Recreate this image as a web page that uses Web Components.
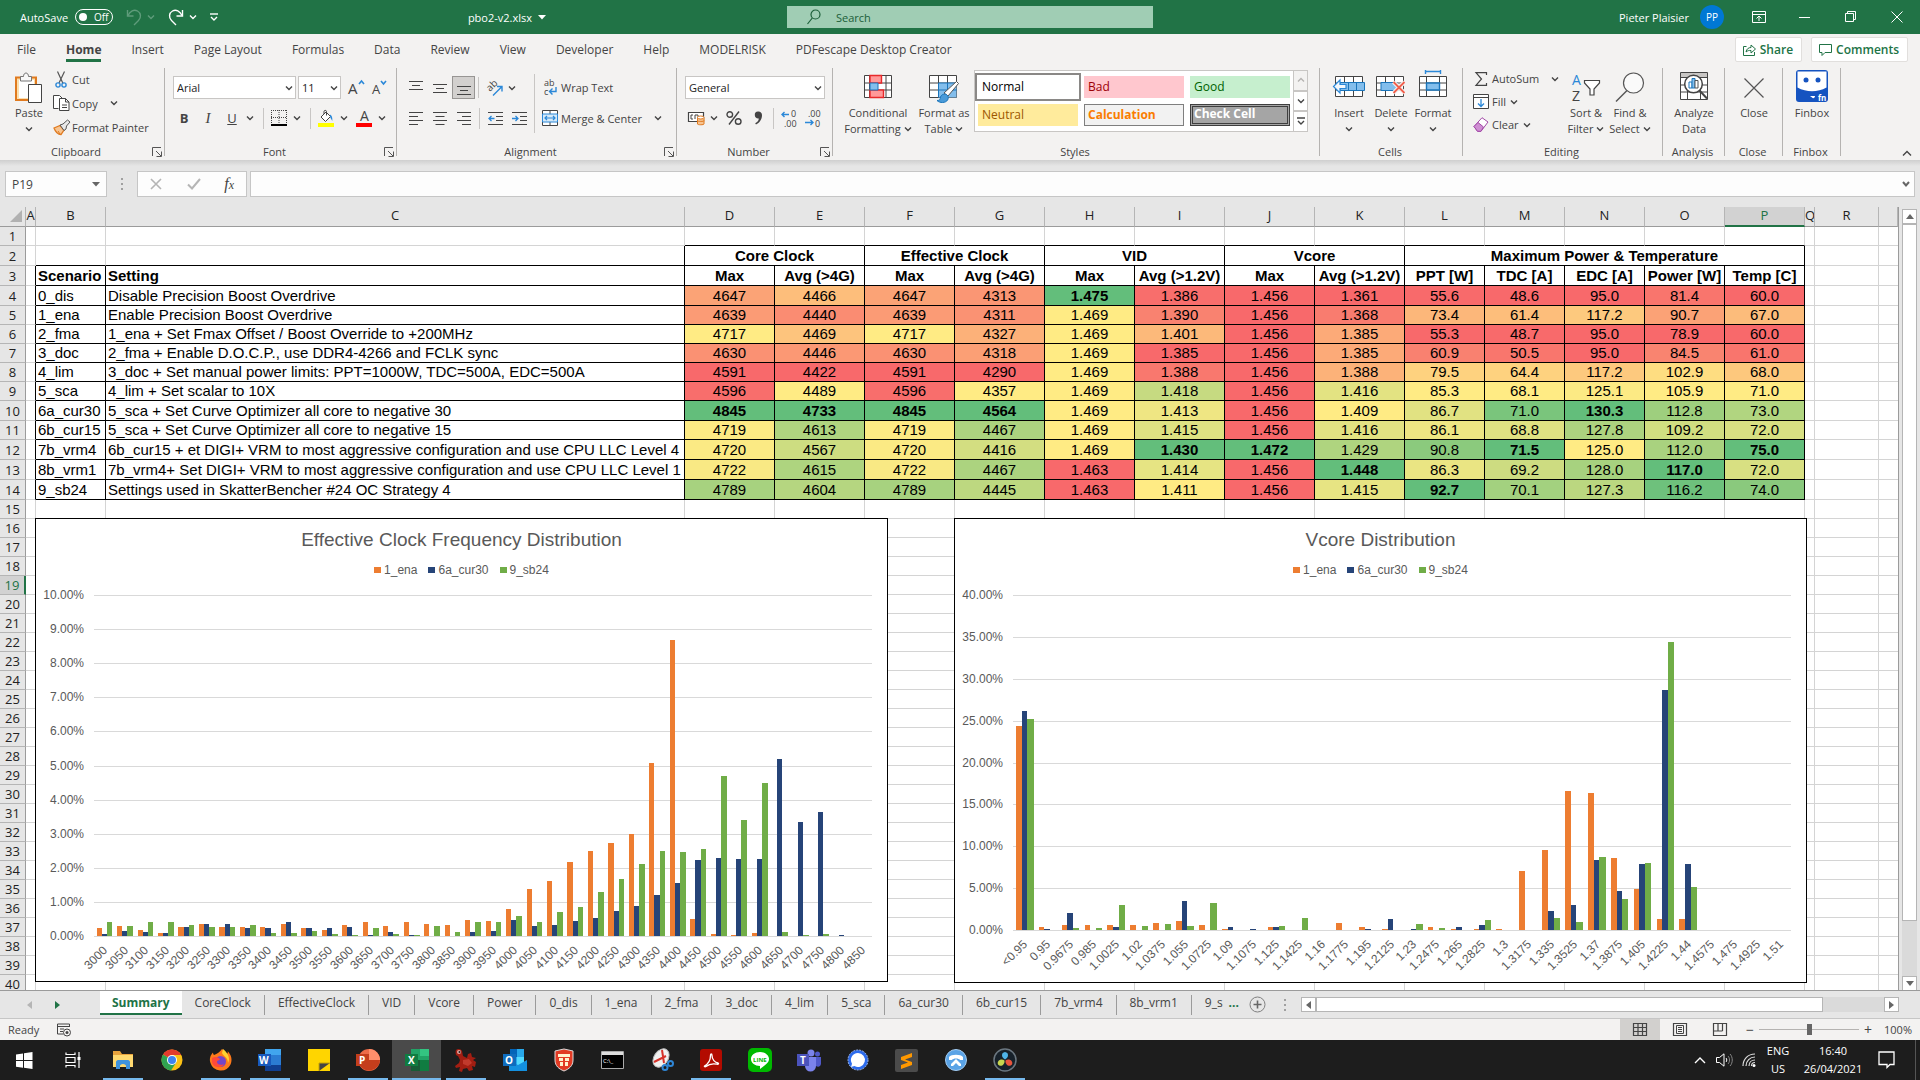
<!DOCTYPE html>
<html lang="en">
<head>
<meta charset="utf-8">
<title>pbo2-v2.xlsx - Excel</title>
<style>
  html, body {
    margin: 0;
    height: 100%;
    overflow: hidden;
  }
  body {
    font-family: "Open Sans", "Noto Sans", sans-serif;
    font-size: 11px;
    color: #444;
    background: #e6e6e6;
  }
</style>
</head>
<body>
<excel-window></excel-window>

<script>
// name: [width, height, svg markup]
const ICONS = {
  chevron: [8, 8, '<path d="M1 2.5l3 3 3-3" fill="none" stroke="#444" stroke-width="1.4"/>'],
  chevronLight: [8, 8, '<path d="M1 2.5l3 3 3-3" fill="none" stroke="currentColor" stroke-width="1.4"/>'],
  undo: [16, 18, '<g fill="none" stroke="#5f9c7b" stroke-width="1.4"><path d="M1.500 2v6h6"/><path d="M2 7.500C4 3 8 1 11.500 3s4 6.500 1 9.500L8 17"/></g>'],
  redo: [16, 18, '<g fill="none" stroke="#fff" stroke-width="1.4"><path d="M14.500 2v6h-6"/><path d="M14 7.500C12 3 8 1 4.500 3s-4 6.500-1 9.500L8 17"/></g>'],
  customize: [8, 8, '<path d="M0 1h8" stroke="#fff" stroke-width="1.4"/><path d="M1 4l3 3 3-3" fill="none" stroke="#fff" stroke-width="1.4"/>'],
  caret: [8, 5, '<path d="M0 0h8L4 4.500z" fill="currentColor"/>'],
  search: [14, 16, '<g fill="none" stroke="#1b5e38" stroke-width="1.2"><circle cx="8.500" cy="5.500" r="4.500"/><path d="M5.300 9L.5 15"/></g>'],
  ribbonOptions: [14, 12, '<g fill="none" stroke="#fff"><path d="M.5.5h13v11H.5zM.5 3.500h13M7 10V5.500M4.500 7.500L7 5l2.500 2.500"/></g>'],
  minimize: [12, 12, '<path d="M0 6.500h11" stroke="#fff"/>'],
  restore: [12, 12, '<path d="M.5 2.500h8v8h-8zM2.500 2V.5h8v8H9" fill="none" stroke="#fff"/>'],
  close: [12, 12, '<path d="M.5.5l11 11M11.500.5l-11 11" stroke="#fff" fill="none"/>'],
  share: [13, 13, '<path d="M3.500 3.500h-3v9h11V9M3 9c.5-3 2.500-4.500 5-4.500V2l4.500 4L8 10V7.500C6 7.300 4.500 7.600 3 9z" fill="none" stroke="#217346"/>'],
  comment: [13, 12, '<path d="M.5.500h12v8H6l-3 3v-3H.5z" fill="none" stroke="#217346"/>'],
  paste: [30, 32, '<path d="M2 5.500h20V28H2z" fill="#fbe0ae" stroke="#e07a1f" stroke-width="2"/><path d="M5 8h15v18H5z" fill="#fff"/><path d="M6.500 9V4.500h3C9.500 2.500 10.500 1 12 1s2.500 1.500 2.500 3.500h3V9z" fill="#f8f8f8" stroke="#777"/><path d="M14.500 12.500h13v18h-13z" fill="#fff" stroke="#444"/>'],
  cut: [12, 17, '<g fill="none"><path d="M2.500.5l5.500 12M9.500.5L4 12" stroke="#555" stroke-width="1.2"/><circle cx="3" cy="14" r="2.100" stroke="#2b88d8" stroke-width="1.4"/><circle cx="9" cy="14" r="2.100" stroke="#2b88d8" stroke-width="1.4"/></g>'],
  copy: [17, 16, '<g fill="#fff" stroke="#444"><path d="M5.500 13.500h-5v-13h6l3 3"/><path d="M6.500 3.500h6l3.500 3.500v8.500h-9.500z"/><path d="M12.500 3.500V7H16" fill="none"/><path d="M9 10h5M9 12.500h5"/></g>'],
  painter: [17, 15, '<path d="M1 8l6-2.500L11 10l-3 4.500C5 14.500 2.500 12 1 8z" fill="#f7c491" stroke="#e07a1f" stroke-width="1.3"/><path d="M5 11l2 3" stroke="#e07a1f"/><path d="M7 5l3-1 4.500-4L17 2l-3.500 4L13 9l-2 1.500z" fill="#e8e8e8" stroke="#555"/>'],
  launcher: [10, 10, '<path d="M9 .5H.5V9M4 4l5 5M9.500 4.500v5h-5" fill="none" stroke="#555"/>'],
  growA: [17, 18, '<text x="1" y="15" font-size="15" fill="#444">A</text><path d="M12 5l2.500-3L17 5" fill="none" stroke="#2b88d8" stroke-width="1.6"/>'],
  shrinkA: [16, 18, '<text x="1" y="15" font-size="13" fill="#444">A</text><path d="M10 2l2.500 3L15 2" fill="none" stroke="#2b88d8" stroke-width="1.6"/>'],
  borders: [16, 16, '<path d="M.5 0v15M15.500 0v15M0 .5h16M8 0v15M0 7.500h16" stroke="#444" stroke-dasharray="1 1" fill="none"/><path d="M0 15h16" stroke="#000" stroke-width="2"/>'],
  fill: [16, 17, '<path d="M3 7l5-5 4.500 4.500-5 5z" fill="#fff" stroke="#444"/><path d="M6 4V1.500C6 0 8.500 0 8.500 1.500v4" fill="none" stroke="#444"/><path d="M12 4.500c2 1 2.500 3 2.300 6.500L12 7z" fill="#2b88d8"/><path d="M0 13h16v4H0z" fill="#ff0"/>'],
  fontColor: [16, 17, '<text x="4" y="11" font-size="14" fill="#444">A</text><path d="M0 13h16v4H0z" fill="#f00"/>'],
  alignTop: [14, 16, '<path d="M0 1.500h14M3 5.500h8M0 9.500h14" stroke="#444"/>'],
  alignMiddle: [14, 16, '<path d="M0 4.500h14M3 8.500h8M0 12.500h14" stroke="#444"/>'],
  alignBottom: [14, 16, '<path d="M0 6.500h14M3 10.500h8M0 14.500h14" stroke="#444"/>'],
  left: [14, 14, '<path d="M0 1.500h14M0 5.500h9M0 9.500h14M0 13.500h9" stroke="#444"/>'],
  center: [14, 14, '<path d="M0 1.500h14M2.500 5.500h9M0 9.500h14M2.500 13.500h9" stroke="#444"/>'],
  right: [14, 14, '<path d="M0 1.500h14M5 5.500h9M0 9.500h14M5 13.500h9" stroke="#444"/>'],
  orient: [17, 16, '<text font-size="10" fill="#444" transform="translate(4 12) rotate(-45)">ab</text><path d="M7 15.500L15.500 7M11 6.500h5v5" fill="none" stroke="#2b88d8" stroke-width="1.4"/>'],
  outdent: [15, 14, '<path d="M0 1.500h15M8 5.500h7M8 9.500h7M0 13.500h15" stroke="#444"/><path d="M6.500 7.500H1M3.500 5L1 7.500 3.500 10" fill="none" stroke="#2b88d8" stroke-width="1.3"/>'],
  indent: [15, 14, '<path d="M0 1.500h15M8 5.500h7M8 9.500h7M0 13.500h15" stroke="#444"/><path d="M0 7.500h6M3.500 5L6 7.500 3.500 10" fill="none" stroke="#2b88d8" stroke-width="1.3"/>'],
  wrap: [15, 17, '<text x="1" y="7" font-size="9" fill="#444">ab</text><text x="1" y="16" font-size="9" fill="#444">c</text><path d="M13 8v4.500H7M9.500 9.500l-3 3 3 3" fill="none" stroke="#2b88d8" stroke-width="1.4"/>'],
  merge: [16, 16, '<path d="M.5.5h15v15H.5zM8 .5v3.500M8 12v3.500" fill="#fff" stroke="#444"/><path d="M.5 4h15v8H.5z" fill="#d5e9f8" stroke="#2b88d8"/><path d="M3 8h10M5 6L3 8l2 2M11 6l2 2-2 2" fill="none" stroke="#2b88d8" stroke-width="1.200"/>'],
  currency: [17, 15, '<path d="M.5 1.500h15v9H.5z" fill="#fff" stroke="#444" stroke-width="1.2"/><path d="M5 4H3v4h2M7 8V4h3v3" fill="none" stroke="#444"/><path d="M9.500 6.500v6.500c0 1 6.500 1 6.500 0V6.500" fill="#f7c491" stroke="#e07a1f"/><ellipse cx="12.700" cy="6.500" rx="3.200" ry="1.500" fill="#fff" stroke="#e07a1f"/><path d="M9.500 9.700c0 1 6.500 1 6.500 0" fill="none" stroke="#e07a1f"/>'],
  percent: [16, 16, '<g fill="none" stroke="#444" stroke-width="1.4"><circle cx="3.800" cy="4.500" r="2.800"/><circle cx="12.200" cy="11.500" r="2.800"/><path d="M13 1.500l-10 13"/></g>'],
  comma: [9, 14, '<path d="M4 .5a3.500 3.500 0 0 1 4 3.800C8 8.500 5.500 12 2 13.500l-.8-1.300C3.500 11 4.700 9.500 4.800 7.500 2.500 7.800.8 6.200.8 4A3.300 3.300 0 0 1 4 .5z" fill="#444"/>'],
  incDecimal: [17, 17, '<text x="10" y="7" font-size="9" fill="#444">0</text><text x="3" y="17" font-size="9" fill="#444">.00</text><path d="M8 4.500H1M3.500 2L1 4.500 3.500 7" fill="none" stroke="#2b88d8" stroke-width="1.4"/>'],
  decDecimal: [17, 17, '<text x="3" y="7" font-size="9" fill="#444">.00</text><text x="10" y="17" font-size="9" fill="#444">0</text><path d="M0 12.500h8M5.500 10L8 12.500 5.500 15" fill="none" stroke="#2b88d8" stroke-width="1.4"/>'],
  conditional: [28, 32, '<path d="M.5 3.500h27v22H.5zM.5 11h27M.5 18h27M5.500 3.500v22M22 3.500v22" fill="#fff" stroke="#444"/><path d="M6 3.500h11.500V11H6zM6 18h13.500v7.500H6z" fill="#ff9999" stroke="#e8292b" stroke-width="1.4"/><path d="M6 11h8v7H6z" fill="#83beec" stroke="#1a75bb"/>'],
  formatTable: [30, 32, '<path d="M.5 3.500h27v22H.5zM.5 11h27M.5 18h27M9.500 3.500v22M18.500 3.500v22" fill="#fff" stroke="#444"/><path d="M9.500 11h18v14.500h-18z" fill="#83beec"/><path d="M9.500 11h18M9.500 18h18M9.500 11v14.500M18.500 11v14.500" fill="none" stroke="#1a75bb"/><path d="M15 21L27.500 9.500l2 2L19 24z" fill="#fff" stroke="#555"/><path d="M8 28.500c3 0 3-1 3.500-3.500 1-3 5-4 7-1.500s0 7-5 7c-2 0-4-.5-5.500-2z" fill="#4a9bd9" stroke="#1a75bb"/>'],
  insertCells: [32, 32, '<path d="M2.500 4.500h27v20h-27zM2.500 11h27M2.500 18h27M11.500 4.500v20M20.500 4.500v20" fill="#fff" stroke="#444"/><path d="M7 10.500h24.500v8H7z" fill="#83beec" stroke="#1a75bb"/><path d="M15.500 10.500v8M23.500 10.500v8" stroke="#1a75bb"/><path d="M7 8l-6.500 6.500L7 21v-4.500h6v-4H7z" fill="#f3f8fc" stroke="#2b88d8" stroke-width="1.2"/>'],
  deleteCells: [30, 32, '<path d="M.5 4.500h27v20H.5zM.5 11h27M.5 18h27M9.500 4.500v20M18.500 4.500v20" fill="#fff" stroke="#444"/><path d="M5 10.500h16v8H5z" fill="#83beec" stroke="#1a75bb"/><path d="M17.500 10l11 11M28.500 10l-11 11" stroke="#f3f2f1" stroke-width="4"/><path d="M17.500 10l11 11M28.500 10l-11 11" stroke="#f25f4c" stroke-width="1.800"/>'],
  formatCells: [30, 32, '<path d="M1.500 4.500h27v20h-27zM1.500 11h27M1.500 18h27M8.500 4.500v20M21.500 4.500v20" fill="#fff" stroke="#444"/><path d="M8.500 11h13v7h-13z" fill="#83beec" stroke="#1a75bb" stroke-width="1.400"/><path d="M7.500-.5h15M7.500-2v4M22.500-2v4" stroke="#2b88d8" stroke-width="1.400"/>'],
  sigma: [13, 14, '<path d="M11.500 3V.7H1L6.500 7 1 13.300h10.500V11" fill="none" stroke="#444" stroke-width="1.200"/>'],
  fillDown: [16, 15, '<path d="M.5.5h15v14H.5zM.5 3.500h15" fill="#fff" stroke="#444"/><path d="M8 5v7.500M5 9.500l3 3 3-3" fill="none" stroke="#2b88d8" stroke-width="1.300"/>'],
  eraser: [16, 15, '<path d="M9 .7L15 5 8 14.300H4.500L1 9.500z" fill="#fff" stroke="#a34aa8"/><path d="M5 5.500l5.500 4.500L8 14.300H4.500L1 9.500z" fill="#cf8fd3" stroke="#a34aa8"/>'],
  sortFilter: [29, 32, '<text x="0" y="13" font-size="14" fill="#2b88d8">A</text><text x="0" y="29" font-size="14" fill="#444">Z</text><path d="M12.500 8.500h15v2.500l-5.500 6v6h-4v-6l-5.500-6z" fill="#fff" stroke="#444" stroke-width="1.200"/>'],
  find: [30, 32, '<circle cx="18.500" cy="11" r="10" fill="#fafafa" stroke="#555" stroke-width="1.200"/><path d="M12 18.500L1 29.500" stroke="#555" stroke-width="1.500"/>'],
  analyze: [29, 32, '<path d="M.5.500h27v27H.5z" fill="#fff" stroke="#444"/><path d="M1 1h26v4H1z" fill="#c8c6c4"/><path d="M.5 5.500h27M.5 13h27M.5 20h27M7.500 5.500v22M20.500 5.500v22" stroke="#444"/><circle cx="13.500" cy="12" r="8.800" fill="#fff" stroke="#444" stroke-width="1.500"/><path d="M19.500 18.500l7.500 8" stroke="#444" stroke-width="2"/><path d="M9 10h3v6H9z" fill="#fff" stroke="#1a75bb"/><path d="M12 6.500h3V16h-3z" fill="#83beec" stroke="#1a75bb"/><path d="M15 8.500h3V16h-3z" fill="#fff" stroke="#555"/>'],
  closeBig: [20, 32, '<path d="M.5 6.500l19 19M19.500 6.500l-19 19" stroke="#555" stroke-width="1.200"/>'],
  finbox: [32, 32, '<rect y="-2" width="32" height="32" rx="3" fill="#1553c0"/><path d="M1.500-.5h29v16c-9 5-20 5-29 0z" fill="#fff"/><circle cx="10" cy="8" r="2.500" fill="#1553c0"/><circle cx="22" cy="8" r="2.500" fill="#1553c0"/><path d="M14 24h5c0 2-2 3-3 1.500z" fill="#fff"/><text x="22" y="29" font-size="8" font-weight="700" fill="#fff">fn</text>'],
  collapse: [10, 6, '<path d="M1 5.500l4-4 4 4" fill="none" stroke="#444" stroke-width="1.400"/>'],
  cancel: [13, 12, '<path d="M1 1l10 10M11 1L1 11" stroke="#b5b5b5" stroke-width="1.600"/>'],
  check: [14, 12, '<path d="M1 6.500l4 4L13 1" fill="none" stroke="#b5b5b5" stroke-width="2"/>'],
  more: [8, 6, '<path d="M1 1l3 3.500L7 1" fill="none" stroke="#666" stroke-width="2"/>'],
  dots: [2, 12, '<path d="M0 1h2M0 6h2M0 11h2" stroke="#a0a0a0" stroke-width="2"/>'],
  triUp: [8, 5, '<path d="M0 5h8L4 0z" fill="#666"/>'],
  triDown: [8, 5, '<path d="M0 0h8L4 5z" fill="#666"/>'],
  triLeft: [5, 8, '<path d="M5 0v8L0 4z" fill="currentColor"/>'],
  triRight: [5, 8, '<path d="M0 0v8l5-4z" fill="currentColor"/>'],
  addSheet: [17, 17, '<circle cx="8.500" cy="8.500" r="7.500" fill="none" stroke="#808080"/><path d="M8.500 4.500v8M4.500 8.500h8" stroke="#666" stroke-width="1.600"/>'],
  macro: [15, 14, '<path d="M12.500 4V1H.5v10h6" fill="none" stroke="#444"/><path d="M.5 3.500h12M3 6h4M3 8.500h3" stroke="#444"/><circle cx="10" cy="9.500" r="3.500" fill="#f3f2f1" stroke="#444"/><circle cx="10" cy="9.500" r="1.500" fill="#444"/>'],
  viewNormal: [14, 13, '<path d="M.5.500h13v12H.5zM.5 4.500h13M.5 8.500h13M5 .5v12M9.500.500v12" fill="none" stroke="#444" stroke-width="1.200"/>'],
  viewPage: [14, 13, '<path d="M.5.500h13v12H.5z" fill="none" stroke="#444" stroke-width="1.200"/><path d="M3.500 2.500h7v8h-7zM5 4.500h4M5 6.500h4M5 8.500h4" fill="none" stroke="#444"/>'],
  viewBreak: [14, 13, '<path d="M.5.500h13v12H.5zM5 .5v7.500M9.500.500v7.500M.5 8h9" fill="none" stroke="#444" stroke-width="1.200"/>'],
  // taskbar
  windows: [17, 17, '<path d="M0 2.400L7 1.400v6.700H0zM8 1.300L16.500 0v8.100H8zM0 9h7v6.700l-7-1zM8 9h8.500v8.100L8 15.800z" fill="#fff"/>'],
  taskView: [17, 16, '<g fill="none" stroke="#fff" stroke-width="1.200"><path d="M1 .5v2h9v-2M1 15.500v-2h9v2M1 5.500h9v5H1zM14 0v16"/></g><path d="M12.500 5h3v3h-3z" fill="#fff"/>'],
  explorer: [22, 20, '<path d="M1 1h7l2 3h11v13H1z" fill="#e8a33d"/><path d="M1 5h20v12H1z" fill="#ffd970"/><path d="M4 12c0-1 1-2 2-2h10c1 0 2 1 2 2v7h-4v-3c0-1-1-2-3-2s-3 1-3 2v3H4z" fill="#3f93dd"/>'],
  chrome: [22, 22, '<circle cx="11" cy="11" r="10.500" fill="#fbc116"/><path d="M11 11L2 5.500A10.500 10.500 0 0 1 20.200 6H11z" fill="#e33b2e"/><path d="M11 11L2 5.500A10.500 10.500 0 0 0 10 21.500L15.500 13z" fill="#30a350"/><circle cx="11" cy="11" r="5" fill="#fff"/><circle cx="11" cy="11" r="4" fill="#3f83f2"/>'],
  firefox: [24, 24, '<path d="M13 1c2 2 4 3 5 5 1-1 1-2 .5-3 4 4 5 9 3 13.500A10.800 10.800 0 0 1 1.500 15C0 11 1.500 7 4 4.500c0 1 .5 2 1 2.500C8 6 11 4 13 1z" fill="#ff7a1a"/><path d="M14 1c4 3 8 9 5 14 0-6-5-7-6-10z" fill="#ffd233"/><circle cx="11.500" cy="13.500" r="5.500" fill="#7545c9"/><path d="M3 10c3-2 6-1 8 1 1 1-3 1-3 3s3 4 7 2c-2 5-11 4-12-2z" fill="#ff4a3a"/>'],
  word: [24, 22, '<path d="M7 0h16v22H7z" fill="#2b7cd3"/><path d="M7 0h16v6H7z" fill="#41a5ee"/><path d="M7 16h16v6H7z" fill="#103f91"/><path d="M0 5h13v12H0z" fill="#185abd"/><text x="1" y="15" font-size="10" font-weight="700" fill="#fff">W</text>'],
  sticky: [22, 22, '<path d="M0 0h22v22H0z" fill="#ffd500"/><path d="M11 22V14h11z" fill="#444"/><path d="M11 22V14h11" fill="none" stroke="#c9a400"/>'],
  powerpoint: [24, 22, '<circle cx="13" cy="11" r="11" fill="#ed6c47"/><path d="M13 0a11 11 0 0 1 11 11H13z" fill="#ff8f6b"/><path d="M3 15a11 11 0 0 0 21-4H13z" fill="#c43e1c"/><path d="M0 5h13v12H0z" fill="#c43e1c"/><text x="3" y="15" font-size="10" font-weight="700" fill="#fff">P</text>'],
  excel: [24, 22, '<path d="M6 0h18v22H6z" fill="#21a366"/><path d="M15 0h9v7h-9z" fill="#33c481"/><path d="M6 11h9v11H6z" fill="#185c37"/><path d="M15 11h9v11h-9z" fill="#107c41"/><path d="M0 5h13v12H0z" fill="#107c41"/><text x="3" y="15" font-size="10" font-weight="700" fill="#fff">X</text>'],
  dragon: [24, 24, '<path d="M2 2c2-2 5-1 6 1l1 5 4 2 1-4 3-1 1 4 4 1-3 2 3 2-1 5-3-1 1 4-4 1-2-3-4 1-1 3-3-1 1-4-4 1-1-2 4-3 1-3-2-4c-2 0-3-3-2-6z" fill="#a31e12"/><path d="M9 12l6-1 3 4-4 3-5-2z" fill="#c23a2c"/><circle cx="5" cy="4" r="2" fill="#e3a9a2"/><circle cx="5.500" cy="4" r="1" fill="#222"/>'],
  outlook: [24, 22, '<path d="M7 0h14v16H7z" fill="#28a8ea"/><path d="M7 0h7v8H7z" fill="#0364b8"/><path d="M14 8h7v8h-7z" fill="#50d9ff"/><path d="M6 11l9 5 9-5v11H6z" fill="#1490df"/><path d="M0 5h13v12H0z" fill="#0f6cbd"/><text x="2" y="15" font-size="10" font-weight="700" fill="#fff">O</text>'],
  shield: [20, 22, '<path d="M1 2l9-2 9 2v9c0 6-4 9-9 11-5-2-9-5-9-11z" fill="#e23b24" stroke="#ddd"/><path d="M4 5h12v3H4zM5 9h4v3H5zM11 9h4v3h-4zM6 13h3v4H6zM11 13h3v4h-3z" fill="#fff3cf"/>'],
  terminal: [23, 18, '<path d="M.5.500h22v17H.5z" fill="#000" stroke="#aaa"/><path d="M1 1h21v3H1z" fill="#ddd"/><text x="2" y="12" font-size="6" fill="#fff">C:\\_</text>'],
  snip: [24, 22, '<ellipse cx="11" cy="9" rx="7" ry="10" fill="#f1f1f1" stroke="#bbb" transform="rotate(35 11 9)"/><path d="M4 13L16 7M12 1l2 13" stroke="#d6332b" stroke-width="2"/><g fill="none" stroke="#2f86d6" stroke-width="2"><circle cx="15" cy="18.500" r="2.500"/><circle cx="20.500" cy="14.500" r="2.500"/></g>'],
  acrobat: [22, 22, '<rect width="22" height="22" rx="3" fill="#b30b00"/><path d="M4.500 17c3.500-2 6-6 6-10.500 0-2 1.500-2 1.500 0 0 4 3 7 6 7.500 1 .5.500 1.500-1 1.200-4-.8-8-.2-11 2.300-1 .6-2 0-1.500-.5z" fill="none" stroke="#fff" stroke-width="1.300"/>'],
  line: [24, 24, '<rect width="24" height="24" rx="5" fill="#00b900"/><path d="M12 4c5 0 9 3 9 7s-5 7-9 10v-3c-5 0-9-3-9-7s4-7 9-7z" fill="#fff"/><text x="5" y="14" font-size="6" font-weight="700" fill="#00b900">LINE</text>'],
  teams: [24, 22, '<circle cx="14" cy="4" r="3.500" fill="#7b83eb"/><circle cx="20.500" cy="5" r="2.500" fill="#5059c9"/><path d="M8 8h11v9a5 5 0 0 1-11 0z" fill="#7b83eb"/><path d="M19 8h5v7a3 3 0 0 1-5 2z" fill="#5059c9"/><path d="M0 5h12v12H0z" fill="#4b53bc"/><text x="3" y="15" font-size="10" font-weight="700" fill="#fff">T</text>'],
  signal: [22, 22, '<circle cx="11" cy="11" r="10" fill="#2c6bed" stroke="#9db9f5" stroke-dasharray="2 1"/><path d="M11 4a7 7 0 1 1-3.500 13.100L4 18l1-3.300A7 7 0 0 1 11 4z" fill="#fff"/>'],
  sublime: [23, 23, '<rect width="23" height="23" rx="2" fill="#4b4b4b"/><path d="M6 8l11-4v4l-7 2.500 7 2.500v3L6 20v-4l7-2.500L6 11z" fill="#ff9800"/>'],
  bridge: [22, 22, '<circle cx="11" cy="11" r="10.500" fill="#5aa3e6" stroke="#a4cdf3"/><path d="M4 8c2-3 12-3 14 0v3h-3c-1-2-7-2-8 0H4zM6 15l5-5 5 5v2h-2l-3-3-3 3H6z" fill="#fff"/>'],
  resolve: [24, 24, '<circle cx="12" cy="12" r="11" fill="#17212a" stroke="#6b7780" stroke-width="1.500"/><path d="M12 11.500c-4-2-4-7 0-7.500 4 .5 4 5.500 0 7.500z" fill="#4fb4e8"/><path d="M11.500 12.500c.5 4.500-4 7-6.500 4 -1.500-3.500 3-6.500 6.500-4z" fill="#c7d64f"/><path d="M12.500 12.500c-.5 4.500 4 7 6.500 4 1.500-3.500-3-6.500-6.500-4z" fill="#e8553d"/>'],
  trayUp: [12, 8, '<path d="M1 7l5-5 5 5" fill="none" stroke="#fff" stroke-width="1.400"/>'],
  speaker: [17, 14, '<path d="M.5 4.500h3L8 .8v12.400L3.500 9.500h-3z" fill="none" stroke="#fff"/><path d="M10 5c1 1 1 3 0 4" fill="none" stroke="#fff"/><path d="M12 3c2 2 2 6 0 8M14 1c3 3 3 9 0 12" fill="none" stroke="#888"/>'],
  wifi: [14, 14, '<g fill="none" stroke="#ddd" stroke-width="1.200"><path d="M1 13C1 6 6 1 13 1M4 13c0-5 4-9 9-9M7 13c0-3.500 2.500-6 6-6M9.500 13c0-2 1.500-3.500 3.500-3.500"/></g><circle cx="12" cy="12.500" r="1.500" fill="#fff"/>'],
  notify: [18, 18, '<path d="M1 1h15v12.500h-4l-3 3v-3H1z" fill="none" stroke="#fff" stroke-width="1.300"/>']
}

const BASE = `
  * { box-sizing: border-box; }
  button, input, select {
    font: inherit;
    color: inherit;
    margin: 0;
    padding: 0;
    border: 0;
    border-radius: 0;
    background: none;
    outline: none;
  }
`

class BaseElement extends HTMLElement {
  constructor () {
    super()
    this.shadowDOM = this.attachShadow({ mode: 'open' })
  }

  connectedCallback () {
    this.shadowDOM.innerHTML = `<style>${BASE}${this.styles()}</style>${this.markup()}`
  }
}

class UiIcon extends BaseElement {
  styles () {
    return `
      :host { display: inline-flex; flex: none; }
      svg { display: block; overflow: visible; }
    `
  }

  markup () {
    const [w, h, body] = ICONS[this.getAttribute('name')]
    return `<svg width="${w}" height="${h}" viewBox="0 0 ${w} ${h}" aria-hidden="true">${body}</svg>`
  }
}
customElements.define('ui-icon', UiIcon)

const icon = name => `<ui-icon name="${name}"></ui-icon>`

class TitleBar extends BaseElement {
  styles () {
    return `
      :host {
        display: grid;
        grid-template-columns: 1fr auto 1fr;
        height: 34px;
        padding-left: 20px;
        box-sizing: border-box;
        background: #217346;
        color: #fff;
      }
      div, label, button { display: flex; align-items: center; }
      .save { gap: 7px; }
      .save input {
        appearance: none;
        width: 38px;
        height: 16px;
        border: 1px solid #fff;
        border-radius: 8px;
      }
      .switch { display: grid; align-items: center; }
      .switch > * { grid-area: 1 / 1; }
      .switch span { display: flex; align-items: center; gap: 7px; padding-left: 4px; font-size: 10px; }
      .switch span::before { content: ""; width: 8px; height: 8px; border-radius: 50%; background: #fff; }
      .quick { gap: 5px; margin-left: 13px; }
      .quick.dim { color: #5f9c7b; }
      .file { margin-left: auto; padding-right: 241px; gap: 6px; }
      .search {
        width: 366px;
        height: 22px;
        margin: 6px 0;
        padding-left: 20px;
        gap: 15px;
        background: #a0cdb4;
      }
      .search input { flex: 1; min-width: 0; font-size: 11px; }
      .search input::placeholder { color: #1b5e38; opacity: 1; }
      .right { justify-content: flex-end; }
      .avatar {
        width: 24px;
        height: 24px;
        margin: 0 12px 0 11px;
        justify-content: center;
        border-radius: 50%;
        background: #0078d4;
        font-size: 10px;
      }
      .sys { width: 46px; height: 32px; justify-content: center; }
    `
  }

  markup () {
    return `
      <div>
        <label class="save">AutoSave
          <span class="switch"><input type="checkbox"><span>Off</span></span>
        </label>
        <button class="quick dim" aria-label="Undo">${icon('undo')}${icon('chevronLight')}</button>
        <button class="quick" aria-label="Redo">${icon('redo')}${icon('chevronLight')}</button>
        <button class="quick" aria-label="Customize">${icon('customize')}</button>
        <button class="file">pbo2-v2.xlsx ${icon('caret')}</button>
      </div>
      <label class="search">${icon('search')}<input type="text" placeholder="Search" aria-label="Search"></label>
      <div class="right">
        <span>Pieter Plaisier</span>
        <div class="avatar">PP</div>
        <button class="sys" aria-label="Ribbon options">${icon('ribbonOptions')}</button>
        <button class="sys" aria-label="Minimize">${icon('minimize')}</button>
        <button class="sys" aria-label="Restore">${icon('restore')}</button>
        <button class="sys" aria-label="Close">${icon('close')}</button>
      </div>
    `
  }
}
customElements.define('title-bar', TitleBar)

class RibbonTabs extends BaseElement {
  styles () {
    return `
      :host {
        display: flex;
        align-items: flex-start;
        justify-content: space-between;
        height: 34px;
        padding: 0 12px 0 17px;
        background: #f3f2f1;
        font-size: 12px;
      }
      nav, .actions { display: flex; }
      nav { gap: 30px; }
      nav button { height: 28px; padding-top: 6px; border-bottom: 3px solid transparent; white-space: nowrap; }
      nav .active { font-weight: 700; border-color: #217346; }
      .actions { gap: 9px; padding-top: 3px; }
      .actions button {
        display: flex;
        align-items: center;
        gap: 4px;
        height: 25px;
        padding: 0 8px 0 7px;
        border: 1px solid #e1dfdd;
        border-radius: 2px;
        background: #fff;
        color: #217346;
        font-weight: 600;
      }
    `
  }

  markup () {
    const tabs = ['File', 'Home', 'Insert', 'Page Layout', 'Formulas', 'Data', 'Review', 'View', 'Developer', 'Help', 'MODELRISK', 'PDFescape Desktop Creator']
    return `
      <nav>${tabs.map(t => `<button${t === 'Home' ? ' class="active"' : ''}>${t}</button>`).join('')}</nav>
      <div class="actions">
        <button>${icon('share')}Share</button>
        <button>${icon('comment')}Comments</button>
      </div>
    `
  }
}
customElements.define('ribbon-tabs', RibbonTabs)

class RibbonGroup extends BaseElement {
  styles () {
    return `
      :host {
        display: flex;
        flex-direction: column;
        flex: none;
        height: 92px;
        background: linear-gradient(#b5b3b1, #b5b3b1) right top / 1px 88px no-repeat;
      }
      .body { display: flex; height: 76px; padding-left: var(--inset, 7px); }
      footer { display: flex; align-items: center; height: 16px; line-height: 16px; padding-right: 3px; }
      footer span { flex: 1; text-align: center; }
    `
  }

  markup () {
    return `
      <div class="body"><slot></slot></div>
      <footer><span>${this.getAttribute('label')}</span>${this.hasAttribute('launcher') ? icon('launcher') : ''}</footer>
    `
  }
}
customElements.define('ribbon-group', RibbonGroup)

// tall button: picture on top, one or two lines of text below
class BigButton extends BaseElement {
  styles () {
    return `
      :host { display: block; flex: none; width: var(--w, 44px); }
      button {
        display: flex;
        flex-direction: column;
        align-items: center;
        width: 100%;
        padding-top: 4px;
        line-height: 16px;
        white-space: nowrap;
      }
      .pic { display: flex; justify-content: center; height: 33px; }
      .second { display: flex; align-items: center; gap: 3px; height: 16px; }
    `
  }

  markup () {
    return `
      <button>
        <span class="pic">${icon(this.getAttribute('icon'))}</span>
        <slot></slot>
        <span class="second">${this.getAttribute('second') || ''}${this.hasAttribute('menu') ? icon('chevron') : ''}</span>
      </button>
    `
  }
}
customElements.define('big-button', BigButton)

// icon with its text on the right
class RowButton extends BaseElement {
  styles () {
    return `
      :host { display: block; }
      button { display: flex; align-items: center; height: var(--h, 24px); white-space: nowrap; }
      .pic { display: flex; justify-content: center; width: 18px; margin-right: 2px; }
      .menu { display: flex; margin-left: var(--menu-gap, 4px); }
    `
  }

  markup () {
    return `
      <button>
        <span class="pic">${icon(this.getAttribute('icon'))}</span>
        <slot></slot>
        ${this.hasAttribute('menu') ? `<span class="menu">${icon('chevron')}</span>` : ''}
      </button>
    `
  }
}
customElements.define('row-button', RowButton)

class ToolButton extends BaseElement {
  styles () {
    return `
      :host { display: flex; flex: none; align-items: center; height: 22px; font-size: 13px; }
      button { display: flex; align-items: center; justify-content: center; width: 24px; height: 22px; }
      .menu { width: 12px; }
      :host([pressed]) > button { border: 1px solid #979593; background: #d2d0ce; height: 23px; width: 23px; }
    `
  }

  markup () {
    const name = this.getAttribute('icon')
    return `
      <button aria-label="${this.getAttribute('label') || name}">${name ? icon(name) : '<slot></slot>'}</button>
      ${this.hasAttribute('menu') ? `<button class="menu" aria-label="More">${icon('chevron')}</button>` : ''}
    `
  }
}
customElements.define('tool-button', ToolButton)

class ComboBox extends BaseElement {
  styles () {
    return `
      :host { display: grid; width: var(--w); height: 23px; align-items: center; }
      select {
        grid-area: 1 / 1;
        appearance: none;
        width: 100%;
        height: 100%;
        padding-left: 3px;
        border: 1px solid #c8c6c4;
        background: #fff;
        color: #222;
      }
      ui-icon { grid-area: 1 / 1; justify-self: end; margin-right: 3px; pointer-events: none; }
    `
  }

  markup () {
    return `
      <select aria-label="${this.getAttribute('label')}"><option>${this.getAttribute('value')}</option></select>
      ${icon('chevron')}
    `
  }
}
customElements.define('combo-box', ComboBox)

class StyleGallery extends BaseElement {
  styles () {
    return `
      :host { display: flex; flex: none; height: 62px; margin: 2px 0 0 2px; border: 1px solid #c8c6c4; background: #fff; }
      .swatches {
        display: grid;
        grid-template-columns: repeat(3, 100px);
        grid-auto-rows: 22px;
        gap: 6px;
        padding: 5px 4px 0 3px;
      }
      .swatches button { padding: 0 0 2px 4px; text-align: left; font-size: 12px; }
      .normal { color: #000; outline: 2px solid #8a8886; outline-offset: 1px; }
      .bad { background: #ffc7ce; color: #9c0006; }
      .good { background: #c6efce; color: #006100; }
      .neutral { background: #ffeb9c; color: #9c5700; }
      .calc, .check { font-weight: 700; }
      .swatches .calc { background: #f2f2f2; color: #fa7d00; border: 1px solid #7f7f7f; padding-left: 3px; }
      .swatches .check { background: #a5a5a5; color: #fff; border: 3px double #3f3f3f; padding-left: 1px; line-height: 14px; }
      .scroll { display: flex; flex-direction: column; margin: -1px; }
      .scroll button {
        display: flex;
        flex: 1;
        align-items: center;
        justify-content: center;
        width: 15px;
        border: 1px solid #c8c6c4;
        background: #fff;
      }
      .scroll button:first-child { color: #b5b3b1; background: #f3f2f1; }
      .up { transform: rotate(180deg); }
    `
  }

  markup () {
    return `
      <div class="swatches">
        <button class="normal">Normal</button>
        <button class="bad">Bad</button>
        <button class="good">Good</button>
        <button class="neutral">Neutral</button>
        <button class="calc">Calculation</button>
        <button class="check">Check Cell</button>
      </div>
      <div class="scroll">
        <button aria-label="Scroll up"><ui-icon class="up" name="chevronLight"></ui-icon></button>
        <button aria-label="Scroll down">${icon('chevron')}</button>
        <button aria-label="More styles"><svg width="8" height="9"><path d="M0 1h8M1 4l3 3 3-3" fill="none" stroke="#444" stroke-width="1.400"/></svg></button>
      </div>
    `
  }
}
customElements.define('style-gallery', StyleGallery)

class RibbonBar extends BaseElement {
  styles () {
    return `
      :host { display: flex; height: 92px; background: #f3f2f1; }
      .rows { display: flex; flex-direction: column; margin-top: -1px; }
      .tools { display: flex; flex-direction: column; gap: 8px; padding-top: 8px; }
      .tools > div { display: flex; align-items: center; height: 22px; }
      .tools > div:first-child { height: 23px; }
      .text-tools { --h: 22px; gap: 9px; }
      .sep { flex: none; width: 1px; height: 21px; margin: 0 3px; background: #c8c6c4; }
      .font .sep { margin-left: 7px; }
      .tall { flex: none; width: 1px; height: 59px; margin: 6px 6px 0 3px; background: #c8c6c4; }
      .collapse { display: flex; margin: auto 8px 4px auto; }
    `
  }

  markup () {
    return `
      <ribbon-group label="Clipboard" launcher style="width: 165px; --inset: 9px">
        <big-button icon="paste" menu style="--w: 40px">Paste</big-button>
        <div class="rows" style="margin-left: 3px">
          <row-button icon="cut">Cut</row-button>
          <row-button icon="copy" menu style="--menu-gap: 12px">Copy</row-button>
          <row-button icon="painter">Format Painter</row-button>
        </div>
      </ribbon-group>
      <ribbon-group label="Font" launcher style="width: 232px">
        <div class="tools font">
          <div>
            <combo-box label="Font" value="Arial" style="--w: 123px; margin: 0 2px 0 1px"></combo-box>
            <combo-box label="Font size" value="11" style="--w: 43px; margin-right: 2px"></combo-box>
            <tool-button icon="growA"></tool-button>
            <tool-button icon="shrinkA"></tool-button>
          </div>
          <div>
            <tool-button label="Bold"><b>B</b></tool-button>
            <tool-button label="Italic"><i style="font-family: 'Liberation Serif', serif; font-size: 15px">I</i></tool-button>
            <tool-button label="Underline" menu><u>U</u></tool-button>
            <span class="sep"></span>
            <tool-button icon="borders" menu></tool-button>
            <span class="sep"></span>
            <tool-button icon="fill" menu></tool-button>
            <tool-button icon="fontColor" menu style="margin-left: 2px"></tool-button>
          </div>
        </div>
      </ribbon-group>
      <ribbon-group label="Alignment" launcher style="width: 280px">
        <div class="tools">
          <div>
            <tool-button icon="alignTop"></tool-button>
            <tool-button icon="alignMiddle"></tool-button>
            <tool-button icon="alignBottom" pressed></tool-button>
            <span class="sep"></span>
            <tool-button icon="orient" menu></tool-button>
          </div>
          <div>
            <tool-button icon="left"></tool-button>
            <tool-button icon="center"></tool-button>
            <tool-button icon="right"></tool-button>
            <span class="sep"></span>
            <tool-button icon="outdent"></tool-button>
            <tool-button icon="indent"></tool-button>
          </div>
        </div>
        <span class="tall"></span>
        <div class="tools text-tools">
          <row-button icon="wrap">Wrap Text</row-button>
          <row-button icon="merge" menu style="--menu-gap: 12px">Merge &amp; Center</row-button>
        </div>
      </ribbon-group>
      <ribbon-group label="Number" launcher style="width: 156px">
        <div class="tools">
          <div><combo-box label="Number format" value="General" style="--w: 140px; margin-left: 1px"></combo-box></div>
          <div>
            <tool-button icon="currency" menu></tool-button>
            <tool-button icon="percent" style="margin-left: 2px"></tool-button>
            <tool-button icon="comma"></tool-button>
            <span class="sep"></span>
            <tool-button icon="incDecimal"></tool-button>
            <tool-button icon="decDecimal"></tool-button>
          </div>
        </div>
      </ribbon-group>
      <ribbon-group label="Styles" style="width: 487px">
        <big-button icon="conditional" second="Formatting" menu style="--w: 76px">Conditional</big-button>
        <big-button icon="formatTable" second="Table" menu style="--w: 56px">Format as</big-button>
        <style-gallery></style-gallery>
      </ribbon-group>
      <ribbon-group label="Cells" style="width: 143px; --inset: 8px">
        <big-button icon="insertCells" menu style="--w: 42px">Insert</big-button>
        <big-button icon="deleteCells" menu style="--w: 42px">Delete</big-button>
        <big-button icon="formatCells" menu style="--w: 42px">Format</big-button>
      </ribbon-group>
      <ribbon-group label="Editing" style="width: 200px; --inset: 9px">
        <div class="rows" style="width: 92px; --h: 23px">
          <row-button icon="sigma" menu style="--menu-gap: 12px">AutoSum</row-button>
          <row-button icon="fillDown" menu>Fill</row-button>
          <row-button icon="eraser" menu>Clear</row-button>
        </div>
        <big-button icon="sortFilter" second="Filter" menu>Sort &amp;</big-button>
        <big-button icon="find" second="Select" menu>Find &amp;</big-button>
      </ribbon-group>
      <ribbon-group label="Analysis" style="width: 62px; --inset: 9px">
        <big-button icon="analyze" second="Data">Analyze</big-button>
      </ribbon-group>
      <ribbon-group label="Close" style="width: 58px">
        <big-button icon="closeBig">Close</big-button>
      </ribbon-group>
      <ribbon-group label="Finbox" style="width: 58px">
        <big-button icon="finbox">Finbox</big-button>
      </ribbon-group>
      <button class="collapse" aria-label="Collapse ribbon">${icon('collapse')}</button>
    `
  }
}
customElements.define('ribbon-bar', RibbonBar)

class FormulaBar extends BaseElement {
  styles () {
    return `
      :host {
        display: flex;
        align-items: flex-start;
        height: 47px;
        padding: 11px 5px 0;
        box-sizing: border-box;
        background: linear-gradient(#cfcfcf, #e6e6e6 6px);
      }
      .box { display: flex; align-items: center; height: 26px; border: 1px solid #c6c6c6; background: #fdfdfd; }
      .name { width: 102px; padding: 0 6px; color: #666; }
      .name input { flex: 1; min-width: 0; color: #444; font-size: 12px; }
      .dots { display: flex; align-items: center; height: 26px; padding: 0 14px; }
      .keys { width: 110px; justify-content: space-around; margin-right: 3px; }
      .keys button { display: flex; }
      .fx { font: italic 16px "Liberation Serif", serif; color: #444; }
      .fx small { font-size: 12px; padding-top: 3px; }
      .formula { flex: 1; padding-right: 4px; }
      .formula input { flex: 1; height: 100%; }
    `
  }

  markup () {
    return `
      <div class="box name"><input type="text" value="P19" aria-label="Name box">${icon('caret')}</div>
      <span class="dots">${icon('dots')}</span>
      <div class="box keys">
        <button aria-label="Cancel">${icon('cancel')}</button>
        <button aria-label="Enter">${icon('check')}</button>
        <button class="fx" aria-label="Insert function">f<small>x</small></button>
      </div>
      <div class="box formula"><input type="text" aria-label="Formula">${icon('more')}</div>
    `
  }
}
customElements.define('formula-bar', FormulaBar)

const SERIES = [['1_ena', '#ed7d31'], ['6a_cur30', '#264478'], ['9_sb24', '#70ad47']]

const CHARTS = {
  clock: {
    title: 'Effective Clock Frequency Distribution',
    max: 10,
    step: 1,
    height: 464,
    base: 357,
    labels: Array.from({ length: 38 }, (_, i) => String(3000 + i * 50)),
    values: [
      [.22, .30, .19, .1, .25, .36, .27, .27, .27, .36, .22, .19, .33, .42, .3, .4, .36, .33, .48, .45, .78, 1.39, 1.6, 2.18, 2.48, 2.74, 3, 5.06, 8.67, .51, .07, .04, .1, 0, 0, 0, 0, 0],
      [.07, .16, .13, .1, .25, .36, .36, .22, .22, .42, .22, .22, .25, .04, .13, .04, 0, 0, .13, .16, .48, .3, .33, .45, .54, .72, .89, 1.19, 1.54, 2.24, 2.3, 2.27, 2.27, 5.2, 3.35, 3.65, .04, 0],
      [.4, .3, .42, .42, .33, .27, .25, .33, .1, .1, .16, .07, .04, .22, .07, .04, .3, .13, .4, .4, .6, .42, .69, .86, 1.3, 1.66, 2.12, 2.5, 2.45, 2.56, 4.7, 3.41, 4.5, .13, .04, .07, 0, 0]
    ]
  },
  vcore: {
    title: 'Vcore Distribution',
    max: 40,
    step: 5,
    height: 465,
    base: 351,
    labels: ['<0.95', ...Array.from({ length: 33 }, (_, i) => String(+(0.95 + i * 0.0175).toFixed(4)))],
    values: [
      [24.4, .4, .64, .64, .64, .64, .88, 1.1, .64, .16, 0, .4, 0, 0, .88, .4, .16, 0, .4, .16, .16, .16, 7.1, 9.6, 16.64, 16.4, 8.64, 4.94, 1.35, 1.35, 0, 0, 0, 0],
      [26.1, .16, 2.07, 0, .4, 0, 0, 3.5, 0, .4, .16, .4, 0, 0, 0, .16, 1.35, .16, 0, .4, .64, 0, 0, 2.3, 3, 8.4, 4.7, 7.92, 28.7, 7.92, 0, 0, 0, 0],
      [25.2, 0, .28, .28, 3, .5, .76, .5, 3.27, 0, 0, .5, 1.47, 0, 0, 0, 0, .76, .28, 0, 1.23, 0, 0, 1.47, 1, 8.76, 3.74, 8.04, 34.4, 5.18, 0, 0, 0, 0]
    ]
  }
}

class BarChart extends BaseElement {
  styles () {
    return `
      :host {
        display: block;
        width: 853px;
        height: ${this.chart.height}px;
        border: 1px solid #000;
        background: #fff;
        color: #595959;
        font-family: "Liberation Sans", Arial, sans-serif;
        font-size: 12px;
        box-sizing: border-box;
      }
      h2 { margin: 0; padding-top: 9px; font-size: 19px; font-weight: 400; line-height: 24px; text-align: center; }
      ul {
        display: flex;
        justify-content: center;
        gap: 11px;
        margin: 0;
        padding: 10px 0 1px;
        list-style: none;
        line-height: 16px;
      }
      li { display: flex; align-items: center; gap: 3px; }
      li::before { content: ""; width: 7px; height: 6px; background: var(--c); }
      svg { display: block; overflow: visible; }
      text { fill: #595959; }
    `
  }

  get chart () {
    return CHARTS[this.getAttribute('data')]
  }

  markup () {
    const { title, max, step, height, base, labels, values } = this.chart
    const left = 58
    const right = 836
    const top = 16
    const slot = (right - left) / labels.length
    const bar = slot / 4
    const scale = (base - top) / max

    let grid = ''
    for (let v = 0; v <= max; v += step) {
      const y = Math.round(base - v * scale)
      grid += `<path d="M${left} ${y}.5H${right}" stroke="#d9d9d9"/>
        <text x="${left - 10}" y="${y + 4}" text-anchor="end">${v.toFixed(2)}%</text>`
    }

    const bars = values.map((list, s) => list.map((v, i) => {
      if (!v) return ''
      const x = Math.round(left + i * slot + slot * 0.125 + s * bar)
      const end = Math.round(left + i * slot + slot * 0.125 + (s + 1) * bar + (s === 2 ? 0.5 : 0))
      const h = Math.max(1, Math.round(v * scale))
      return `<rect x="${x}" y="${base - h}" width="${end - x}" height="${h}" fill="${SERIES[s][1]}"/>`
    }).join('')).join('')

    const ticks = labels.map((label, i) => {
      const x = Math.round(left + (i + 0.5) * slot) + 4
      const y = base + 15
      return `<text x="${x}" y="${y}" text-anchor="end" transform="rotate(-45 ${x} ${y})">${label.replace('<', '&lt;')}</text>`
    }).join('')

    return `
      <h2>${title}</h2>
      <ul>${SERIES.map(([name, color]) => `<li style="--c: ${color}">${name}</li>`).join('')}</ul>
      <svg width="851" height="${height - 62}" role="img" aria-label="${title}">${grid}${bars}${ticks}</svg>
    `
  }
}
customElements.define('bar-chart', BarChart)

const COLUMNS = [
  ['A', 10], ['B', 70], ['C', 579], ['D', 90], ['E', 90], ['F', 90], ['G', 90], ['H', 90], ['I', 90],
  ['J', 90], ['K', 90], ['L', 80], ['M', 80], ['N', 80], ['O', 80], ['P', 80], ['Q', 10], ['R', 64]
]
const TALL_ROWS = [2, 3, 4, 10, 12, 13, 14]
const GROUPS = [['Core Clock', 2], ['Effective Clock', 2], ['VID', 2], ['Vcore', 2], ['Maximum Power &amp; Temperature', 5]]
const HEADINGS = ['Scenario', 'Setting', 'Max', 'Avg (&gt;4G)', 'Max', 'Avg (&gt;4G)', 'Max', 'Avg (&gt;1.2V)', 'Max', 'Avg (&gt;1.2V)', 'PPT [W]', 'TDC [A]', 'EDC [A]', 'Power [W]', 'Temp [C]']
const RESULTS = [
  ['0_dis', 'Disable Precision Boost Overdrive', '4647', '4466', '4647', '4313', '1.475', '1.386', '1.456', '1.361', '55.6', '48.6', '95.0', '81.4', '60.0'],
  ['1_ena', 'Enable Precision Boost Overdrive', '4639', '4440', '4639', '4311', '1.469', '1.390', '1.456', '1.368', '73.4', '61.4', '117.2', '90.7', '67.0'],
  ['2_fma', '1_ena + Set Fmax Offset / Boost Override to +200MHz', '4717', '4469', '4717', '4327', '1.469', '1.401', '1.456', '1.385', '55.3', '48.7', '95.0', '78.9', '60.0'],
  ['3_doc', '2_fma + Enable D.O.C.P., use DDR4-4266 and FCLK sync', '4630', '4446', '4630', '4318', '1.469', '1.385', '1.456', '1.385', '60.9', '50.5', '95.0', '84.5', '61.0'],
  ['4_lim', '3_doc + Set manual power limits: PPT=1000W, TDC=500A, EDC=500A', '4591', '4422', '4591', '4290', '1.469', '1.388', '1.456', '1.388', '79.5', '64.4', '117.2', '102.9', '68.0'],
  ['5_sca', '4_lim + Set scalar to 10X', '4596', '4489', '4596', '4357', '1.469', '1.418', '1.456', '1.416', '85.3', '68.1', '125.1', '105.9', '71.0'],
  ['6a_cur30', '5_sca + Set Curve Optimizer all core to negative 30', '4845', '4733', '4845', '4564', '1.469', '1.413', '1.456', '1.409', '86.7', '71.0', '130.3', '112.8', '73.0'],
  ['6b_cur15', '5_sca + Set Curve Optimizer all core to negative 15', '4719', '4613', '4719', '4467', '1.469', '1.415', '1.456', '1.416', '86.1', '68.8', '127.8', '109.2', '72.0'],
  ['7b_vrm4', '6b_cur15 + et DIGI+ VRM to most aggressive configuration and use CPU LLC Level 4', '4720', '4567', '4720', '4416', '1.469', '1.430', '1.472', '1.429', '90.8', '71.5', '125.0', '112.0', '75.0'],
  ['8b_vrm1', '7b_vrm4+ Set DIGI+ VRM to most aggressive configuration and use CPU LLC Level 1', '4722', '4615', '4722', '4467', '1.463', '1.414', '1.456', '1.448', '86.3', '69.2', '128.0', '117.0', '72.0'],
  ['9_sb24', 'Settings used in SkatterBencher #24 OC Strategy 4', '4789', '4604', '4789', '4445', '1.463', '1.411', '1.456', '1.415', '92.7', '70.1', '127.3', '116.2', '74.0']
]

// red - yellow - green scale over a column, yellow at the median
function scaleColor (value, column) {
  const sorted = column.map(Number).sort((a, b) => a - b)
  const low = sorted[0]
  const mid = sorted[Math.floor(sorted.length / 2)]
  const high = sorted[sorted.length - 1]
  const [from, to, t] = value <= mid
    ? [[248, 105, 107], [255, 235, 132], mid === low ? 0 : (value - low) / (mid - low)]
    : [[255, 235, 132], [99, 190, 123], (value - mid) / (high - mid)]
  return `rgb(${from.map((c, i) => Math.round(c + (to[i] - c) * t)).join(',')})`
}

class WorkSheet extends BaseElement {
  styles () {
    return `
      :host { display: flex; flex: 1; min-height: 0; background: #e6e6e6; }
      .grid {
        position: relative;
        flex: 1;
        min-width: 0;
        overflow: hidden;
        border-right: 1px solid #9b9b9b;
        background: #fff;
      }
      table {
        width: 100%;
        table-layout: fixed;
        border-collapse: separate;
        border-spacing: 0;
        font-family: "Liberation Sans", Arial, sans-serif;
        font-size: 15px;
        line-height: 18px;
        color: #000;
      }
      tr { height: 19px; }
      tr.tall { height: 20px; }
      td, th {
        padding: 0 2px;
        border: solid #d4d4d4;
        border-width: 0 1px 1px 0;
        overflow: hidden;
        white-space: nowrap;
        vertical-align: bottom;
        font-weight: 400;
      }
      td:last-child { border-right: 0; }
      thead th, tbody th[scope=row] {
        background: #e6e6e6;
        color: #222;
        font-family: "Open Sans", "Noto Sans", sans-serif;
        font-size: 13px;
        padding: 0;
        border-color: #9b9b9b #b5b5b5;
      }
      thead th { height: 20px; line-height: 17px; vertical-align: top; }
      tbody th[scope=row] { border-color: #b5b5b5 #9b9b9b; line-height: 17px; }
      thead th.on { background: #d2d2d2; color: #217346; border-bottom: 2px solid #217346; }
      tbody th[scope=row].on { background: #d2d2d2; color: #217346; border-right: 2px solid #217346; }
      .head { font-weight: 700; }
      .num, .mid { text-align: center; }
      .best { font-weight: 700; }
      .right { border-right-color: #000; }
      .bottom { border-bottom-color: #000; }
      .corner { display: block; width: 0; margin: 3px 3px 0 auto; border: 6px solid transparent; border-right-color: #b1b1b1; border-bottom-color: #b1b1b1; }
      bar-chart { position: absolute; top: 311px; }
      .clock { left: 35px; }
      .vcore { left: 954px; }
      .scroll { display: flex; flex-direction: column; width: 15px; margin: 2px 3px -1px; background: #dadada; }
      .scroll button { display: flex; align-items: center; justify-content: center; height: 15px; border: 1px solid #b5b5b5; background: #fff; }
      .thumb { flex: 1; margin-bottom: 55px; border: 1px solid #b5b5b5; background: #fff; }
    `
  }

  cells (row) {
    let html = ''
    COLUMNS.forEach(([name], c) => {
      const i = c - 1
      const inTable = i >= 0 && i < 15
      const edge = []
      if (row >= 3 && row <= 14 && c <= 15) edge.push('right')
      if (row >= 2 && row <= 14 && inTable) edge.push('bottom')
      if (row === 1 && c >= 3 && c <= 15) edge.push('bottom')
      if (row === 2 && (name === 'C')) edge.push('right')
      if (row === 2 && c >= 3 && c <= 15) {
        if (c === 3) {
          html += GROUPS.map(([text, span]) => `<td colspan="${span}" class="head mid right bottom">${text}</td>`).join('')
        }
        return
      }
      let text = ''
      let style = ''
      if (row === 3 && inTable) {
        text = HEADINGS[i]
        edge.push('head', i > 1 ? 'mid' : '')
      } else if (row >= 4 && row <= 14 && inTable) {
        text = RESULTS[row - 4][i]
        if (i > 1) {
          const column = RESULTS.map(r => r[i])
          style = ` style="background: ${scaleColor(+text, column)}"`
          edge.push('num', +text === Math.max(...column) ? 'best' : '')
        }
      }
      html += `<td class="${edge.join(' ').trim()}"${style}>${text}</td>`
    })
    return html + '<td></td>'
  }

  markup () {
    const rows = Array.from({ length: 40 }, (_, i) => i + 1).map(row => `
      <tr${TALL_ROWS.includes(row) ? ' class="tall"' : ''}>
        <th scope="row"${row === 19 ? ' class="on"' : ''}>${row}</th>${this.cells(row)}
      </tr>`).join('')
    return `
      <div class="grid">
        <table>
          <colgroup><col style="width: 26px">${COLUMNS.map(([, w]) => `<col style="width: ${w}px">`).join('')}<col></colgroup>
          <thead><tr><th><span class="corner"></span></th>${COLUMNS.map(([n]) => `<th scope="col"${n === 'P' ? ' class="on"' : ''}>${n}</th>`).join('')}<th></th></tr></thead>
          <tbody>${rows}</tbody>
        </table>
        <bar-chart class="clock" data="clock"></bar-chart>
        <bar-chart class="vcore" data="vcore"></bar-chart>
      </div>
      <div class="scroll">
        <button aria-label="Scroll up">${icon('triUp')}</button>
        <div class="thumb"></div>
        <button aria-label="Scroll down">${icon('triDown')}</button>
      </div>
    `
  }
}
customElements.define('work-sheet', WorkSheet)

class SheetTabs extends BaseElement {
  styles () {
    return `
      :host { display: flex; height: 28px; border-top: 1px solid #9b9b9b; box-sizing: border-box; font-size: 12px; }
      .nav { display: flex; align-items: center; gap: 23px; width: 100px; padding-left: 27px; color: #217346; }
      .nav button { display: flex; }
      .nav button:first-child { color: #b5b5b5; }
      .tab { height: 24px; padding: 0 14px 0 13px; line-height: 24px; background: linear-gradient(#9b9b9b, #9b9b9b) right 4px / 1px 20px no-repeat; }
      .active { padding: 0 12px; border-bottom: 2px solid #217346; background: #fff; color: #217346; font-weight: 700; }
      .cut { padding-right: 0; background: none; }
      .dots { width: 22px; color: #217346; font-weight: 700; line-height: 24px; text-align: center; }
      .add { display: flex; align-items: center; padding-left: 4px; }
      .grip { display: flex; align-items: center; padding: 0 15px 0 18px; }
      .scroll { display: flex; flex: 1; height: 15px; margin: 6px 21px 0 0; background: #dadada; color: #666; }
      .scroll button { display: flex; align-items: center; justify-content: center; width: 15px; border: 1px solid #b5b5b5; background: #fff; }
      .thumb { flex: 1; margin-right: 61px; border: 1px solid #b5b5b5; background: #fff; }
    `
  }

  markup () {
    const tabs = ['CoreClock', 'EffectiveClock', 'VID', 'Vcore', 'Power', '0_dis', '1_ena', '2_fma', '3_doc', '4_lim', '5_sca', '6a_cur30', '6b_cur15', '7b_vrm4', '8b_vrm1']
    return `
      <div class="nav">
        <button aria-label="Previous sheet">${icon('triLeft')}</button>
        <button aria-label="Next sheet">${icon('triRight')}</button>
      </div>
      <button class="tab active">Summary</button>
      ${tabs.map(t => `<button class="tab">${t}</button>`).join('')}
      <button class="tab cut">9_s</button>
      <span class="dots">...</span>
      <button class="add" aria-label="New sheet">${icon('addSheet')}</button>
      <span class="grip">${icon('dots')}</span>
      <div class="scroll">
        <button aria-label="Scroll left">${icon('triLeft')}</button>
        <div class="thumb"></div>
        <button aria-label="Scroll right">${icon('triRight')}</button>
      </div>
    `
  }
}
customElements.define('sheet-tabs', SheetTabs)

class StatusBar extends BaseElement {
  styles () {
    return `
      :host { display: flex; align-items: center; height: 22px; padding: 0 8px; border-top: 1px solid #c6c6c6; box-sizing: border-box; background: #f3f2f1; }
      .ready { margin-right: auto; display: flex; align-items: center; gap: 18px; }
      .view { display: flex; align-items: center; justify-content: center; width: 40px; height: 21px; }
      .view.on { background: #d2d0ce; }
      .step { width: 8px; font-size: 14px; line-height: 20px; text-align: center; }
      .zoom { display: flex; align-items: center; gap: 5px; margin-left: 6px; }
      input { appearance: none; width: 100px; height: 11px; background: linear-gradient(#b5b3b1, #b5b3b1) center / 100% 1px no-repeat; }
      input::-webkit-slider-thumb { appearance: none; width: 5px; height: 11px; background: #666; }
      output { margin-left: 12px; }
    `
  }

  markup () {
    return `
      <span class="ready">Ready ${icon('macro')}</span>
      <button class="view on" aria-label="Normal">${icon('viewNormal')}</button>
      <button class="view" aria-label="Page layout">${icon('viewPage')}</button>
      <button class="view" aria-label="Page break preview">${icon('viewBreak')}</button>
      <div class="zoom">
        <button class="step">−</button>
        <input type="range" min="0" max="200" value="100" aria-label="Zoom">
        <button class="step">+</button>
      </div>
      <output>100%</output>
    `
  }
}
customElements.define('status-bar', StatusBar)

class TaskBar extends BaseElement {
  styles () {
    return `
      :host { display: flex; height: 40px; background: #1d1d1d; color: #fff; }
      button { display: flex; align-items: center; justify-content: center; height: 40px; }
      .app { width: 49px; background: linear-gradient(#76b9ed, #76b9ed) center bottom / 0 2px no-repeat; }
      .run { background-size: 40px 2px; }
      .app.active { background-color: #4a4a4a; background-size: 49px 2px; }
      .tray { display: flex; margin: 0 4px 0 auto; padding-right: 13px; border-right: 1px solid #555; }
      .tray button { line-height: 18px; text-align: center; }
    `
  }

  markup () {
    const apps = ['windows', 'taskView', 'explorer*', 'chrome', 'firefox*', 'word*', 'sticky', 'powerpoint*', 'excel!', 'dragon*', 'outlook', 'shield', 'terminal', 'snip', 'acrobat*', 'line', 'teams', 'signal', 'sublime', 'bridge', 'resolve*']
    return `
      ${apps.map(a => {
        const name = a.replace(/[*!]/, '')
        const state = a.endsWith('*') ? ' run' : a.endsWith('!') ? ' active' : ''
        return `<button class="app${state}" aria-label="${name}">${icon(name)}</button>`
      }).join('')}
      <div class="tray">
        <button style="width: 24px" aria-label="Hidden icons">${icon('trayUp')}</button>
        <button style="width: 24px" aria-label="Volume">${icon('speaker')}</button>
        <button style="width: 26px" aria-label="Network">${icon('wifi')}</button>
        <button style="width: 32px">ENG<br>US</button>
        <button style="width: 78px">16:40<br>26/04/2021</button>
        <button style="width: 30px" aria-label="Notifications">${icon('notify')}</button>
      </div>
    `
  }
}
customElements.define('task-bar', TaskBar)

class ExcelWindow extends BaseElement {
  styles () {
    return ':host { display: flex; flex-direction: column; height: 100vh; }'
  }

  markup () {
    return `
      <title-bar></title-bar>
      <ribbon-tabs></ribbon-tabs>
      <ribbon-bar></ribbon-bar>
      <formula-bar></formula-bar>
      <work-sheet></work-sheet>
      <sheet-tabs></sheet-tabs>
      <status-bar></status-bar>
      <task-bar></task-bar>
    `
  }
}
customElements.define('excel-window', ExcelWindow)
</script>
</body>
</html>
